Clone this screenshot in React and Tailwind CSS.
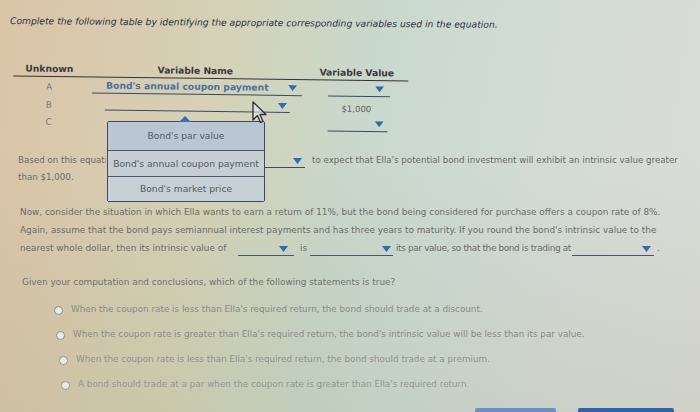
import React from "react";

const Arrow = () => (
  <svg width="9" height="6" viewBox="0 0 9 6" className="shrink-0">
    <path d="M0 0H9L4.5 6Z" fill="#2f6cb3" />
  </svg>
);

export default function App() {
  return (
    <div className="relative w-[700px] h-[412px] overflow-hidden flex flex-col [font-family:'DejaVu_Sans',sans-serif] bg-[linear-gradient(180deg,rgba(255,255,255,0)_35%,rgba(140,140,100,0.14)_100%),linear-gradient(100deg,#dbc4a6_0%,#d8cbb0_16%,#d3d3b8_32%,#c9d8cb_48%,#cddbd4_62%,#d6dcd8_80%,#dbddd8_100%)]">
      {/* title */}
      <p className="ml-[10px] mt-[15px] text-[9.2px] leading-[12px] italic text-[#2e3242] whitespace-nowrap rotate-[0.45deg] origin-left">
        Complete the following table by identifying the appropriate corresponding variables used in the equation.
      </p>

      {/* table */}
      <div className="ml-[13px] mt-[38px] w-[395px] rotate-[0.75deg]">
        <div className="grid grid-cols-[72px_220px_103px] border-b-[1.5px] border-[#333] pb-[2px] text-[9.2px] leading-[11px] font-bold text-[#3a3a3a] text-center">
          <span>Unknown</span>
          <span>Variable Name</span>
          <span>Variable Value</span>
        </div>
        {/* Row A */}
        <div className="grid grid-cols-[72px_220px_103px] h-[17.5px] text-[9px]">
          <span className="text-center text-[#7a7a7a] pt-[3px] leading-[14px]">A</span>
          <div className="ml-[7px] w-[210px] h-[15.5px] border-b border-[#3d4a5c] flex items-center pl-[14px] pr-[5px] pt-[2px]">
            <span className="flex-1 font-bold text-[9.2px] text-[#4d70a6] whitespace-nowrap">Bond&apos;s annual coupon payment</span>
            <Arrow />
          </div>
          <div className="ml-[23px] w-[62px] h-[15.5px] border-b border-[#3d4a5c] flex items-center justify-end pr-[6px] pt-[2px]">
            <Arrow />
          </div>
        </div>
        {/* Row B */}
        <div className="grid grid-cols-[72px_220px_103px] h-[17.5px] text-[9px]">
          <span className="text-center text-[#7a7a7a] pt-[3px] leading-[14px]">B</span>
          <div className="ml-[20px] w-[185px] h-[15.5px] border-b border-[#3d4a5c] flex items-center justify-end pr-[3px] pt-[2px]">
            <Arrow />
          </div>
          <span className="text-center text-[#5e5e5e] text-[8.5px] pt-[3px] leading-[14px]">$1,000</span>
        </div>
        {/* Row C */}
        <div className="grid grid-cols-[72px_220px_103px] h-[17.5px] text-[9px]">
          <span className="text-center text-[#7a7a7a] pt-[3px] leading-[14px]">C</span>
          <span />
          <div className="ml-[23px] w-[60px] h-[15.5px] border-b border-[#3d4a5c] flex items-center justify-end pr-[4px] pt-[2px]">
            <Arrow />
          </div>
        </div>
      </div>

      {/* sentence */}
      <div className="ml-[18px] mt-[20px] text-[8.7px] leading-[17px] text-[#6b6b66]">
        <div className="flex items-center h-[17px] whitespace-nowrap">
          <span className="w-[88px] overflow-hidden">Based on this equation and the data, it is</span>
          <span className="ml-[119px] w-[80px] h-[13px] border-b border-[#3d4a5c] flex items-center justify-end pr-[3px] mt-[2px]">
            <Arrow />
          </span>
          <span className="ml-[7px]">to expect that Ella&apos;s potential bond investment will exhibit an intrinsic value greater</span>
        </div>
        <div className="h-[17px]">than $1,000.</div>
      </div>

      {/* paragraph */}
      <div className="ml-[20px] mt-[17.5px] text-[8.9px] leading-[18px] text-[#6c6c6a] whitespace-nowrap">
        <div>Now, consider the situation in which Ella wants to earn a return of 11%, but the bond being considered for purchase offers a coupon rate of 8%.</div>
        <div>Again, assume that the bond pays semiannual interest payments and has three years to maturity. If you round the bond&apos;s intrinsic value to the</div>
        <div className="flex items-center h-[18px]">
          <span className="w-[218px]">nearest whole dollar, then its intrinsic value of</span>
          <span className="w-[56px] h-[13px] border-b border-[#4a5668] flex items-center justify-end pr-[6px] mt-[2px]"><Arrow /></span>
          <span className="ml-[6px] w-[10px]">is</span>
          <span className="w-[83px] h-[13px] border-b border-[#4a5668] flex items-center justify-end pr-[2px] mt-[2px]"><Arrow /></span>
          <span className="ml-[3px] w-[176px] tracking-[-0.35px]">its par value, so that the bond is trading at</span>
          <span className="w-[82px] h-[13px] border-b border-[#4a5668] flex items-center justify-end pr-[3px] mt-[2px]"><Arrow /></span>
          <span className="ml-[3px]">.</span>
        </div>
      </div>

      {/* question */}
      <p className="ml-[22px] mt-[18px] text-[8.9px] leading-[14px] text-[#727270] whitespace-nowrap">
        Given your computation and conclusions, which of the following statements is true?
      </p>

      {/* options */}
      <div className="mt-[8.5px] flex flex-col text-[8.8px] text-[#8a8a86] whitespace-nowrap">
        <label className="ml-[54px] h-[25px] flex items-center gap-[8px]">
          <span className="w-[9px] h-[9px] rounded-full border border-[#8c8c88] bg-[#ecece4]" />
          <span>When the coupon rate is less than Ella&apos;s required return, the bond should trade at a discount.</span>
        </label>
        <label className="ml-[56px] h-[25px] flex items-center gap-[8px]">
          <span className="w-[9px] h-[9px] rounded-full border border-[#8c8c88] bg-[#ecece4]" />
          <span>When the coupon rate is greater than Ella&apos;s required return, the bond&apos;s intrinsic value will be less than its par value.</span>
        </label>
        <label className="ml-[59px] h-[25px] flex items-center gap-[8px] text-[#92928e]">
          <span className="w-[9px] h-[9px] rounded-full border border-[#929290] bg-[#ecece4]" />
          <span>When the coupon rate is less than Ella&apos;s required return, the bond should trade at a premium.</span>
        </label>
        <label className="ml-[61px] h-[25px] flex items-center gap-[8px] text-[#969692]">
          <span className="w-[9px] h-[9px] rounded-full border border-[#969694] bg-[#ecece4]" />
          <span>A bond should trade at a par when the coupon rate is greater than Ella&apos;s required return.</span>
        </label>
      </div>

      {/* bottom buttons peeking */}
      <div className="mt-auto flex h-[4px]">
        <div className="ml-[475px] w-[81px] h-[4px] bg-[#6690c6] rounded-t-[2px]" />
        <div className="ml-[22px] w-[96px] h-[4px] bg-[#2f64a8] rounded-t-[2px]" />
      </div>

      {/* dropdown popup */}
      <div className="absolute left-[107px] top-[121px] w-[158px] z-10">
        <svg width="12" height="6" viewBox="0 0 12 6" className="absolute left-[72px] -top-[5px]">
          <path d="M0 6L6 0L12 6Z" fill="#3a6db0" />
        </svg>
        <div className="border-[1.5px] border-[#3d4862] rounded-[2px] flex flex-col text-[9.2px] text-[#555a66] text-center">
          <div className="h-[29px] flex items-center justify-center bg-[#bac6d4] border-b-[1.5px] border-[#4a5468]">Bond&apos;s par value</div>
          <div className="h-[26px] flex items-center justify-center bg-[#c6ced6] border-b-[1.5px] border-[#4a5468] whitespace-nowrap">Bond&apos;s annual coupon payment</div>
          <div className="h-[24px] flex items-center justify-center bg-[#c8d0d7]">Bond&apos;s market price</div>
        </div>
      </div>

      {/* mouse cursor */}
      <svg width="16" height="24" viewBox="0 0 16 24" className="absolute left-[252px] top-[101px] z-20">
        <path d="M1 1V19L5.5 14.5L8.5 21.5L11 20.5L8 13.5H14Z" fill="rgba(230,235,235,0.55)" stroke="#2d2d33" strokeWidth="1.3" strokeLinejoin="round" />
      </svg>
    </div>
  );
}
